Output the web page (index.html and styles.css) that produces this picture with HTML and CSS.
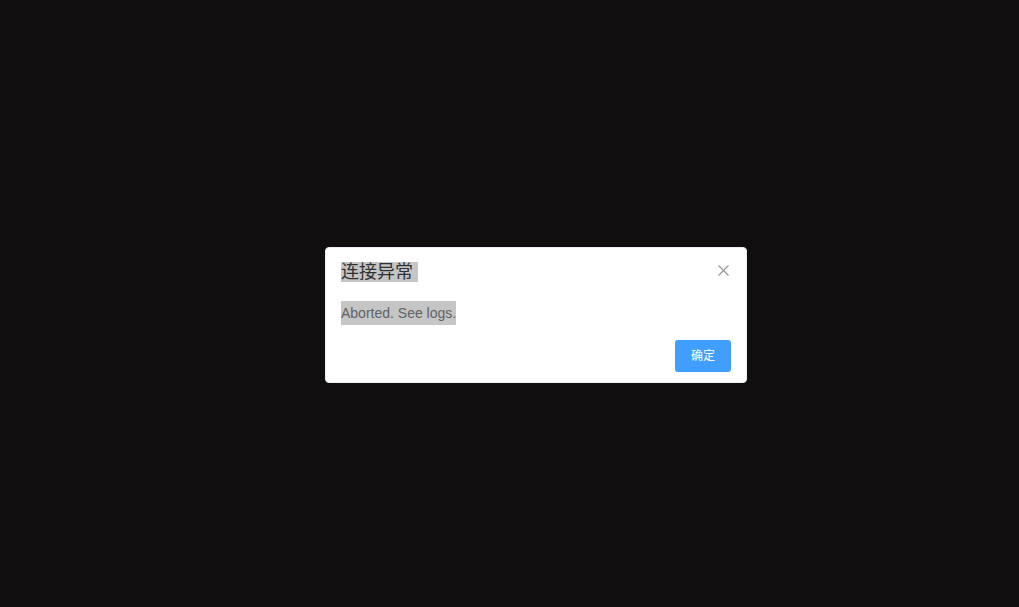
FILE: index.html
```html
<!DOCTYPE html>
<html lang="zh-CN">
<head>
<meta charset="utf-8">
<title>连接异常</title>
<link rel="stylesheet" href="styles.css">
</head>
<body>
<div class="overlay">
  <div class="msgbox">
    <div class="header">
      <div class="title"><span class="sel tsel">连接异常</span></div>
      <button class="close" aria-label="Close">
        <svg width="11" height="11" viewBox="0 0 11 11"><path d="M0.5 0.5L10.5 10.5M10.5 0.5L0.5 10.5" stroke="#909399" stroke-width="1.1" fill="none"/></svg>
      </button>
    </div>
    <div class="content"><span class="sel body">Aborted. See logs.</span></div>
    <div class="btns"><button class="primary">确定</button></div>
  </div>
</div>
</body>
</html>
```
FILE: styles.css
```css
html, body {
  margin: 0;
  height: 100%;
  background: #100e0f;
  font-family: "Liberation Sans", Arial, "Noto Sans CJK SC", sans-serif;
}
.overlay {
  height: 100%;
  display: flex;
  align-items: flex-start;
  justify-content: flex-start;
  padding-top: 247px;
  padding-left: 325px;
  box-sizing: border-box;
}
.msgbox {
  position: relative;
  width: 420px;
  background: #fff;
  border: 1px solid #ebeef5;
  border-radius: 4px;
  padding-bottom: 10px;
}
.header {
  padding: 15px 15px 10px;
}
.title {
  font-size: 18px;
  line-height: 18px;
  color: #303133;
}
.sel {
  background: #c5c5c5;
}
.tsel {
  padding-right: 5px;
}
.close {
  position: absolute;
  top: 17px;
  right: 17px;
  width: 11px;
  height: 11px;
  padding: 0;
  border: 0;
  background: none;
  display: flex;
}
.content {
  padding: 10px 15px;
  font-size: 14px;
  line-height: 24px;
  color: #606266;
}
.body {
  display: inline-block;
  vertical-align: top;
}
.btns {
  padding: 5px 15px 0;
  display: flex;
  justify-content: flex-end;
}
.primary {
  width: 56px;
  height: 32px;
  border: 0;
  border-radius: 3px;
  background: #409eff;
  color: #fff;
  font-size: 12px;
  line-height: 12px;
  font-family: "Liberation Sans", "Noto Sans CJK SC", sans-serif;
  padding: 0 0 1px;
}
```
